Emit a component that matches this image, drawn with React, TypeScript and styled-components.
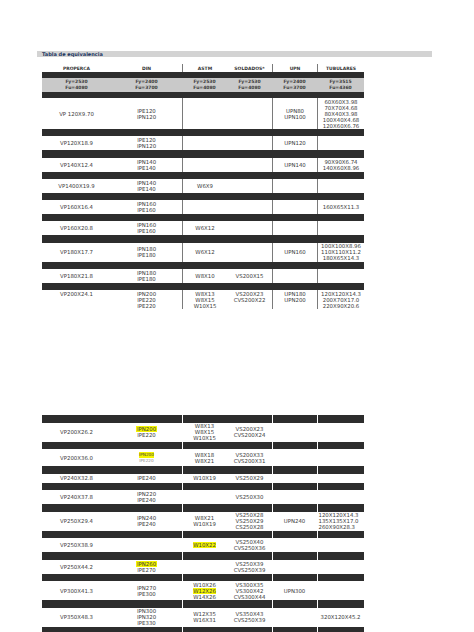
import React from 'react';
import styled, { createGlobalStyle } from 'styled-components';

type Line = string | { t: string; hl?: boolean; sm?: boolean; dim?: boolean };

type RowData = {
    cells: Line[][];
    top?: boolean;
    h?: number;
    tubLeft?: boolean;
};

const GlobalStyle = createGlobalStyle`
    html, body {
        margin: 0;
        padding: 0;
        background: #ffffff;
    }
    body {
        font-family: "DejaVu Sans", Verdana, sans-serif;
        color: #3a3a3a;
    }
`;

const COLS = '69px 71px 45px 45px 45px 47px';

const firstRows: RowData[] = [
    {
        cells: [
            ['VP 120X9.70'],
            ['IPE120', 'IPN120'],
            [],
            [],
            ['UPN80', 'UPN100'],
            ['60X60X3.98', '70X70X4.68', '80X40X3.98', '100X40X4.68', '120X60X6.76'],
        ],
    },
    { cells: [['VP120X18.9'], ['IPE120', 'IPN120'], [], [], ['UPN120'], []] },
    { cells: [['VP140X12.4'], ['IPN140', 'IPE140'], [], [], ['UPN140'], ['90X90X6.74', '140X60X8.96']] },
    { cells: [['VP1400X19.9'], ['IPN140', 'IPE140'], ['W6X9'], [], [], []] },
    { cells: [['VP160X16.4'], ['IPN160', 'IPE160'], [], [], [], ['160X65X11.3']] },
    { cells: [['VP160X20.8'], ['IPN160', 'IPE160'], ['W6X12'], [], [], []] },
    {
        cells: [
            ['VP180X17.7'],
            ['IPN180', 'IPE180'],
            ['W6X12'],
            [],
            ['UPN160'],
            ['100X100X8.96', '110X110X11.2', '180X65X14.3'],
        ],
    },
    { cells: [['VP180X21.8'], ['IPN180', 'IPE180'], ['W8X10'], ['VS200X15'], [], []] },
    {
        top: true,
        cells: [
            ['VP200X24.1'],
            ['IPN200', 'IPE220', 'IPE220'],
            ['W8X13', 'W8X15', 'W10X15'],
            ['VS200X23', 'CVS200X22'],
            ['UPN180', 'UPN200'],
            ['120X120X14.3', '200X70X17.0', '220X90X20.6'],
        ],
    },
];

const secondRows: RowData[] = [
    {
        cells: [
            ['VP200X26.2'],
            [{ t: 'IPN200', hl: true }, 'IPE220'],
            ['W8X13', 'W8X15', 'W10X15'],
            ['VS200X23', 'CVS200X24'],
            [],
            [],
        ],
    },
    {
        h: 17,
        cells: [
            ['VP200X36.0'],
            [{ t: 'IPN200', hl: true, sm: true }, { t: 'IPE220', sm: true, dim: true }],
            ['W8X18', 'W8X21'],
            ['VS200X33', 'CVS200X31'],
            [],
            [],
        ],
    },
    { h: 9, cells: [['VP240X32.8'], ['IPE240'], ['W10X19'], ['VS250X29'], [], []] },
    { cells: [['VP240X37.8'], ['IPN220', 'IPE240'], [], ['VS250X30'], [], []] },
    {
        tubLeft: true,
        cells: [
            ['VP250X29.4'],
            ['IPN240', 'IPE240'],
            ['W8X21', 'W10X19'],
            ['VS250X28', 'VS250X29', 'CS250X28'],
            ['UPN240'],
            ['120X120X14.3', '135X135X17.0', '260X90X28.3'],
        ],
    },
    { cells: [['VP250X38.9'], [], [{ t: 'W10X22', hl: true }], ['VS250X40', 'CVS250X36'], [], []] },
    { cells: [['VP250X44.2'], [{ t: 'IPN260', hl: true }, 'IPE270'], [], ['VS250X39', 'CVS250X39'], [], []] },
    {
        cells: [
            ['VP300X41.3'],
            ['IPN270', 'IPE300'],
            ['W10X26', { t: 'W12X26', hl: true }, 'W14X26'],
            ['VS300X35', 'VS300X42', 'CVS300X44'],
            ['UPN300'],
            [],
        ],
    },
    {
        cells: [
            ['VP350X48.3'],
            ['IPN300', 'IPN320', 'IPE330'],
            ['W12X35', 'W16X31'],
            ['VS350X43', 'CVS250X39'],
            [],
            ['320X120X45.2'],
        ],
    },
];

// columns that get a grey rule on their left edge
const ruled = [false, false, true, false, true, true];

function renderLine(l: Line, i: number) {
    if (typeof l === 'string') return <Txt key={i}>{l}</Txt>;
    return (
        <Txt key={i} $hl={l.hl} $sm={l.sm} $dim={l.dim}>
            {l.t}
        </Txt>
    );
}

function DataRow({ row, lines }: { row: RowData; lines: boolean }) {
    return (
        <Row $h={row.h}>
            {row.cells.map((c, i) => (
                <Cell
                    key={i}
                    $line={lines && ruled[i]}
                    $top={row.top}
                    $left={row.tubLeft && i === 5}
                >
                    {c.map(renderLine)}
                </Cell>
            ))}
        </Row>
    );
}

function SegBar() {
    return (
        <SplitBar>
            <Seg />
            <Seg />
            <Seg />
            <Seg />
        </SplitBar>
    );
}

function App() {
    return (
        <>
            <GlobalStyle />
            <Page>
                <TitleBar>Tabla de equivalencia</TitleBar>

                <Table>
                    <HeadRow>
                        <HeadCell>PROPERCA</HeadCell>
                        <HeadCell>DIN</HeadCell>
                        <HeadCell $line>ASTM</HeadCell>
                        <HeadCell>SOLDADOS*</HeadCell>
                        <HeadCell $line>UPN</HeadCell>
                        <HeadCell $line>TUBULARES</HeadCell>
                    </HeadRow>
                    <Bar $h={6} />
                    <Band>
                        <BandCell>Fy=2530<br />Fu=4080</BandCell>
                        <BandCell>Fy=2400<br />Fu=3700</BandCell>
                        <BandCell>Fy=2530<br />Fu=4080</BandCell>
                        <BandCell>Fy=2530<br />Fu=4080</BandCell>
                        <BandCell>Fy=2400<br />Fu=3700</BandCell>
                        <BandCell>Fy=3515<br />Fu=4360</BandCell>
                    </Band>
                    <Bar $h={6} />
                    {firstRows.map((r, i) => (
                        <React.Fragment key={i}>
                            {i > 0 && <Bar />}
                            <DataRow row={r} lines />
                        </React.Fragment>
                    ))}
                </Table>

                <Table $gap={106}>
                    {secondRows.map((r, i) => (
                        <React.Fragment key={i}>
                            <SegBar />
                            <DataRow row={r} lines={false} />
                        </React.Fragment>
                    ))}
                    <SegBar />
                </Table>
            </Page>
        </>
    );
}

const Page = styled.div`
    padding: 51px 0 0 37px;
    min-height: 632px;
    box-sizing: border-box;
`;

const TitleBar = styled.div`
    width: 395px;
    height: 6px;
    padding-left: 5px;
    box-sizing: border-box;
    background: #d3d3d3;
    color: #1b3560;
    font-size: 5px;
    font-weight: bold;
    line-height: 6px;
    white-space: nowrap;
`;

const Table = styled.div<{ $gap?: number }>`
    width: 322px;
    margin-left: 5px;
    margin-top: ${(p) => p.$gap ?? 7}px;
`;

const HeadRow = styled.div`
    display: grid;
    grid-template-columns: ${COLS};
    height: 8px;
`;

const HeadCell = styled.div<{ $line?: boolean }>`
    box-sizing: border-box;
    border-left: ${(p) => (p.$line ? '1px solid #7a7a7a' : 'none')};
    display: flex;
    align-items: center;
    justify-content: center;
    font-size: 4.5px;
    font-weight: bold;
    color: #333;
    white-space: nowrap;
`;

const Bar = styled.div<{ $h?: number }>`
    height: ${(p) => p.$h ?? 7.3}px;
    background: #2d2d2d;
`;

const SplitBar = styled.div`
    display: grid;
    grid-template-columns: 140px 90px 45px 47px;
    height: 7.5px;
`;

const Seg = styled.div`
    background: #2d2d2d;
    & + & {
        border-left: 1px solid #ffffff;
    }
`;

const Band = styled.div`
    display: grid;
    grid-template-columns: ${COLS};
    background: #c9c9c9;
    padding: 1px 0;
`;

const BandCell = styled.div`
    text-align: center;
    font-size: 4.5px;
    font-weight: 600;
    line-height: 6px;
    color: #3c3c3c;
`;

const Row = styled.div<{ $h?: number }>`
    display: grid;
    grid-template-columns: ${COLS};
    min-height: ${(p) => p.$h ?? 14}px;
`;

const Cell = styled.div<{ $line?: boolean; $top?: boolean; $left?: boolean }>`
    box-sizing: border-box;
    border-left: ${(p) => (p.$line ? '1px solid #7a7a7a' : 'none')};
    display: flex;
    flex-direction: column;
    justify-content: ${(p) => (p.$top ? 'flex-start' : 'center')};
    align-items: ${(p) => (p.$left ? 'flex-start' : 'center')};
    padding: 0.5px 0 0.5px ${(p) => (p.$left ? '1px' : '0')};
    font-size: 5.4px;
    line-height: 6px;
    white-space: nowrap;
`;

const Txt = styled.span<{ $hl?: boolean; $sm?: boolean; $dim?: boolean }>`
    display: block;
    background: ${(p) => (p.$hl ? '#f4f400' : 'transparent')};
    font-size: ${(p) => (p.$sm ? '4.2px' : 'inherit')};
    color: ${(p) => (p.$dim ? '#8a8a8a' : 'inherit')};
    padding: 0 0.5px;
`;

export default App;
